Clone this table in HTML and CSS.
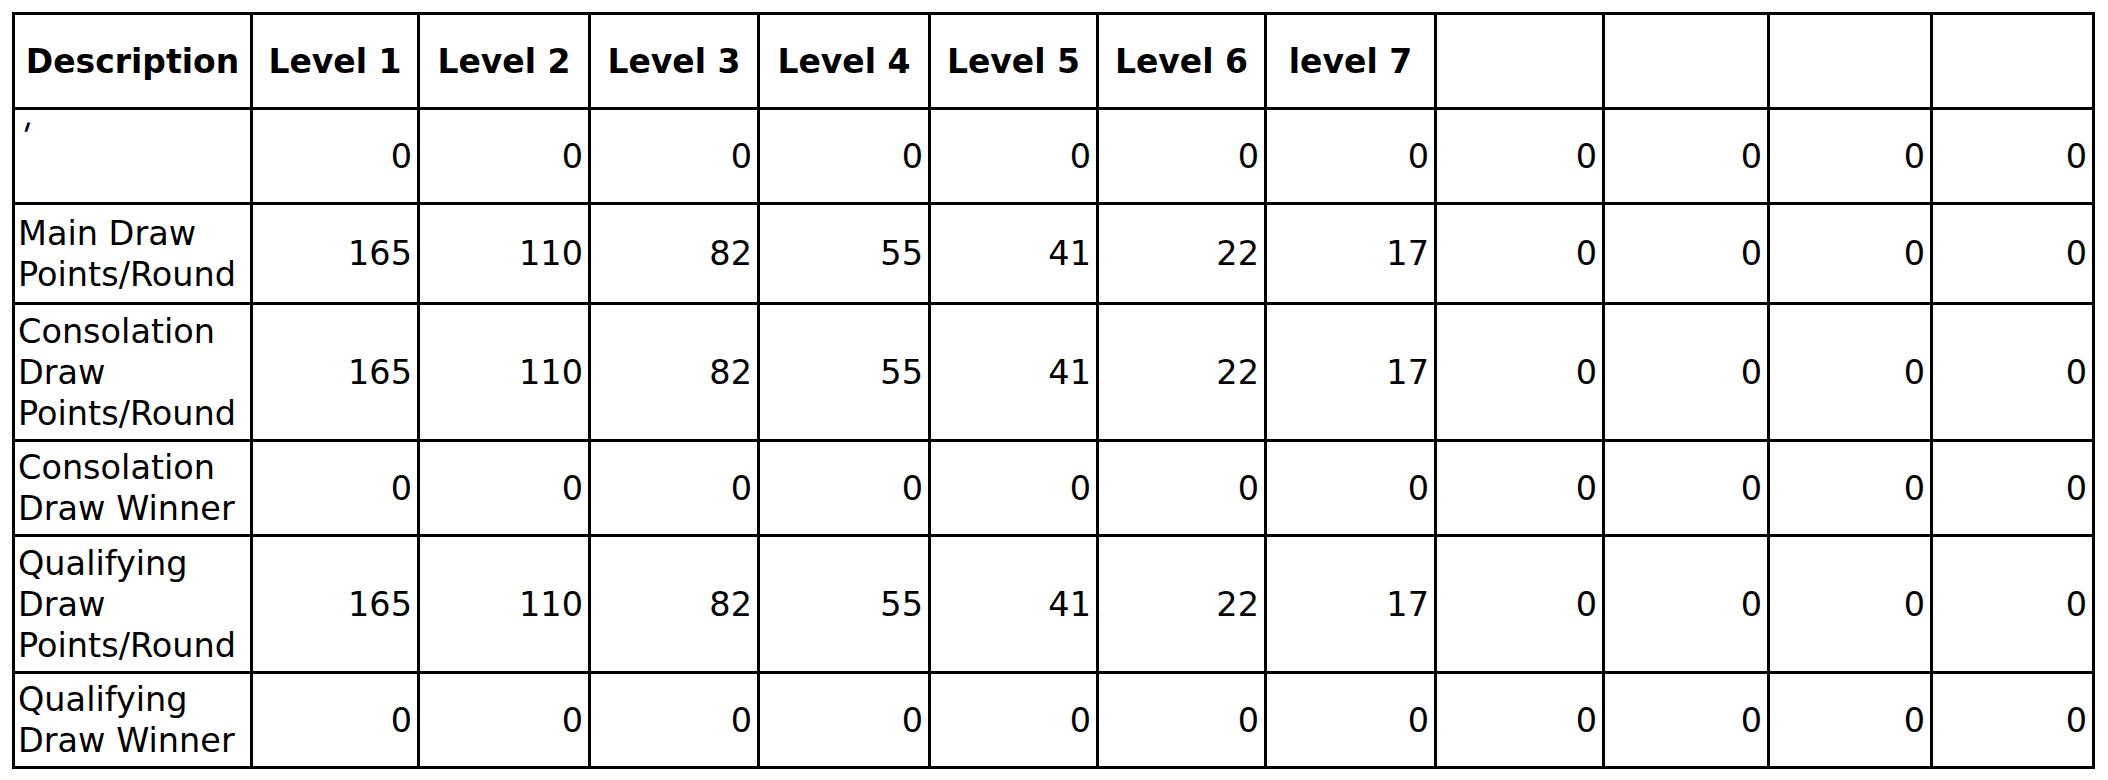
FILE: index.html
```html
<!DOCTYPE html>
<html>
<head>
<meta charset="utf-8">
<title>Points Table</title>
<link rel="stylesheet" href="styles.css">
</head>
<body>
<table class="points">
  <colgroup>
    <col class="c-desc">
    <col class="c-l1"><col class="c-l2"><col class="c-l3"><col class="c-l4">
    <col class="c-l5"><col class="c-l6"><col class="c-l7"><col class="c-e1">
    <col class="c-e2"><col class="c-e3"><col class="c-e4">
  </colgroup>
  <thead>
    <tr>
      <th>Description</th>
      <th>Level 1</th>
      <th>Level 2</th>
      <th>Level 3</th>
      <th>Level 4</th>
      <th>Level 5</th>
      <th>Level 6</th>
      <th>level 7</th>
      <th></th><th></th><th></th><th></th>
    </tr>
  </thead>
  <tbody>
    <tr>
      <td class="desc"><span class="tick">'</span><br>&nbsp;</td>
      <td>0</td><td>0</td><td>0</td><td>0</td><td>0</td><td>0</td><td>0</td><td>0</td><td>0</td><td>0</td><td>0</td>
    </tr>
    <tr class="row-main">
      <td class="desc">Main Draw<br>Points/Round</td>
      <td>165</td><td>110</td><td>82</td><td>55</td><td>41</td><td>22</td><td>17</td><td>0</td><td>0</td><td>0</td><td>0</td>
    </tr>
    <tr class="row-tall">
      <td class="desc">Consolation<br>Draw<br>Points/Round</td>
      <td>165</td><td>110</td><td>82</td><td>55</td><td>41</td><td>22</td><td>17</td><td>0</td><td>0</td><td>0</td><td>0</td>
    </tr>
    <tr>
      <td class="desc">Consolation<br>Draw Winner</td>
      <td>0</td><td>0</td><td>0</td><td>0</td><td>0</td><td>0</td><td>0</td><td>0</td><td>0</td><td>0</td><td>0</td>
    </tr>
    <tr class="row-tall">
      <td class="desc">Qualifying<br>Draw<br>Points/Round</td>
      <td>165</td><td>110</td><td>82</td><td>55</td><td>41</td><td>22</td><td>17</td><td>0</td><td>0</td><td>0</td><td>0</td>
    </tr>
    <tr>
      <td class="desc">Qualifying<br>Draw Winner</td>
      <td>0</td><td>0</td><td>0</td><td>0</td><td>0</td><td>0</td><td>0</td><td>0</td><td>0</td><td>0</td><td>0</td>
    </tr>
  </tbody>
</table>
</body>
</html>
```

FILE: styles.css
```css
html, body {
  margin: 0;
  padding: 0;
  background: #ffffff;
}

body {
  padding: 12px 0 0 12px;
  font-family: "DejaVu Sans", Verdana, sans-serif;
  color: #000000;
}

.points {
  border-collapse: separate;
  border-spacing: 0;
  table-layout: fixed;
  width: 2083px;
  border-top: 3px solid #000;
  border-left: 3px solid #000;
}

.c-desc { width: 238px; }
.c-l1 { width: 167px; }
.c-l2 { width: 171px; }
.c-l3 { width: 169px; }
.c-l4 { width: 171px; }
.c-l5 { width: 168px; }
.c-l6 { width: 168px; }
.c-l7 { width: 170px; }
.c-e1 { width: 168px; }
.c-e2 { width: 165px; }
.c-e3 { width: 163px; }
.c-e4 { width: 162px; }

.points th,
.points td {
  box-sizing: border-box;
  border-right: 3px solid #000;
  border-bottom: 3px solid #000;
  line-height: 41px;
  vertical-align: middle;
}

.points th {
  height: 95px;
  font-size: 33px;
  font-weight: bold;
  text-align: center;
  padding: 0 3px;
  white-space: nowrap;
}

.points td {
  font-size: 33.5px;
  text-align: right;
  padding: 5px 5px 5px 5px;
}

.points td.desc {
  text-align: left;
  padding-left: 3px;
  padding-right: 0;
  white-space: nowrap;
}

.tick {
  display: inline-block;
  transform: skewX(-18deg);
  margin-left: 2px;
}

.row-main td {
  height: 100px;
}

.row-tall td {
  height: 137px;
}
```
